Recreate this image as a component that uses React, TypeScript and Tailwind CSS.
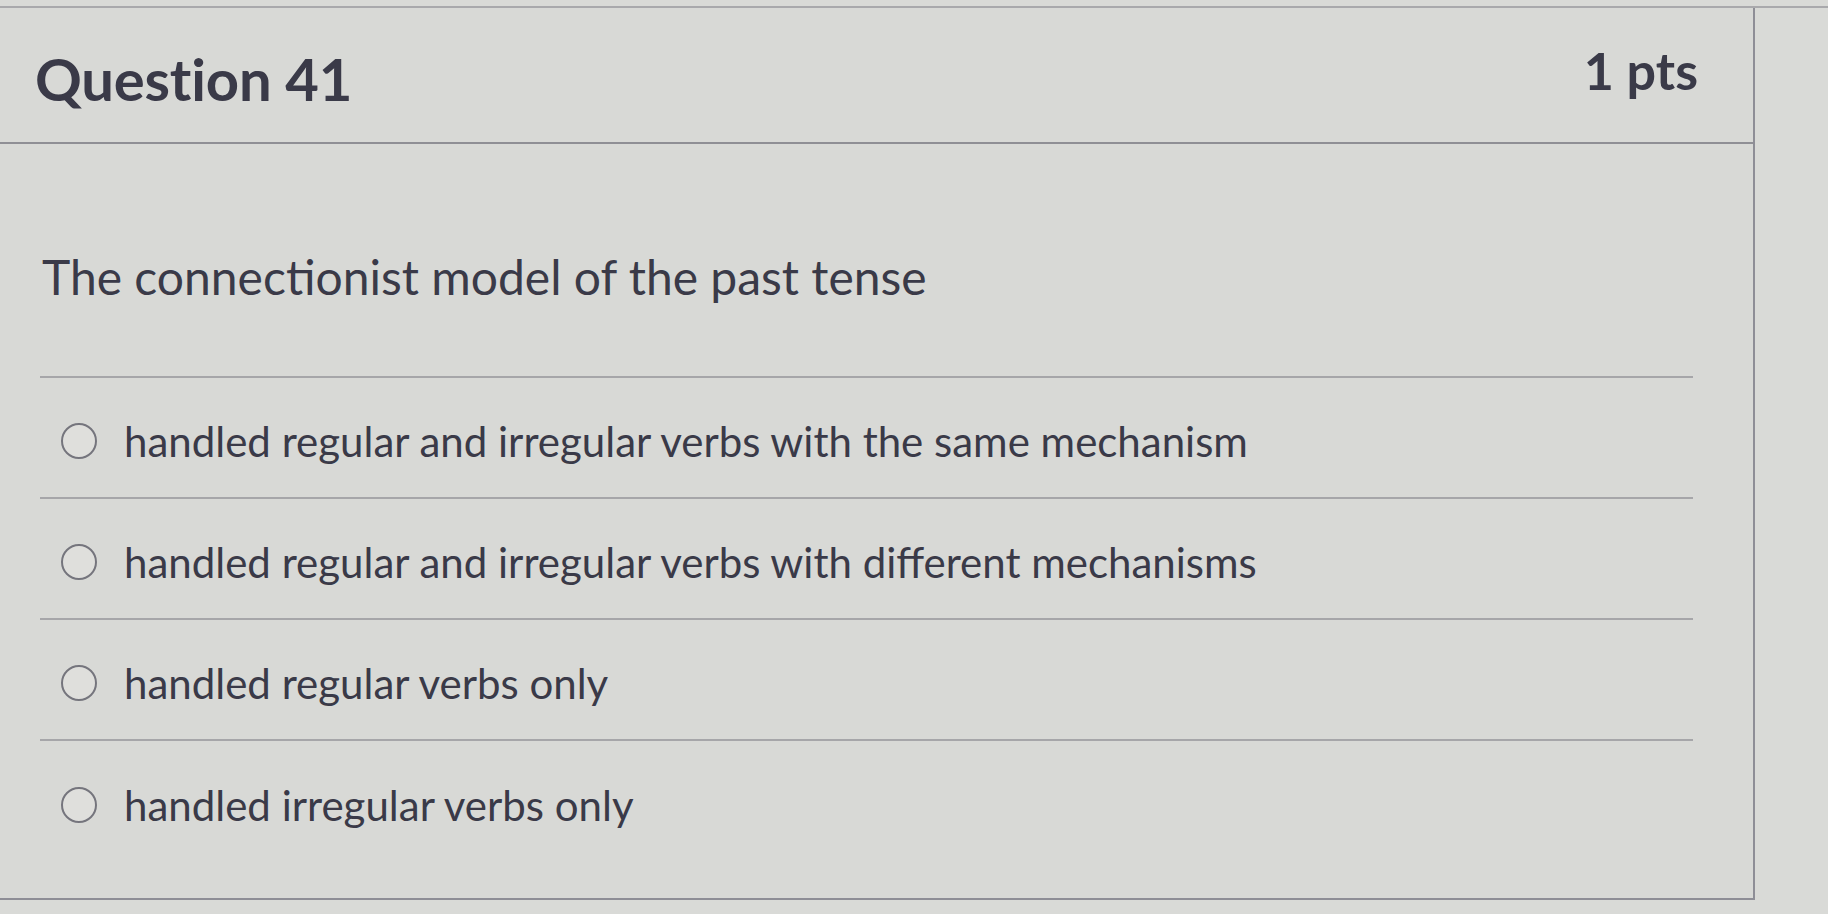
import React from 'react'

const options = [
  'handled regular and irregular verbs with the same mechanism',
  'handled regular and irregular verbs with different mechanisms',
  'handled regular verbs only',
  'handled irregular verbs only',
]

function Radio() {
  return <span className="block h-[36px] w-[36px] shrink-0 rounded-full border-2 border-[#75757d] bg-[#dfdfdc]" />
}

export default function App() {
  return (
    <div
      className="h-[914px] w-full overflow-hidden bg-[#d9dad7] pt-[6px] text-[#3a3a48]"
      style={{ fontFamily: 'Lato, "Noto Sans", sans-serif' }}
    >
      <div className="border-t-2 border-[#a9a9ac]">
        <div className="h-[892px] w-[1755px] border-r-2 border-b-2 border-[#8e8e96] bg-[#d8d9d6]">
          <div className="flex h-[136px] items-center justify-between border-b-2 border-[#8f8f95] pl-[35px] pr-[55px]">
            <h2 className="pt-[8px] text-[58px] font-bold leading-none tracking-[-0.2px]">Question 41</h2>
            <span className="pb-[10px] text-[52px] font-bold leading-none">1 pts</span>
          </div>
          <div className="pl-[40px] pr-[60px]">
            <p className="pt-[104px] pb-[70px] pl-[2px] text-[48px] leading-[1.2] border-b-2 border-[#a6a6a9]">
              The connectionist model of the past tense
            </p>
            {options.map((o, i) => (
              <label
                key={o}
                className={
                  'flex h-[121px] items-center gap-[27px] pl-[21px] pt-[8px] ' +
                  (i < options.length - 1 ? 'border-b-2 border-[#a6a6a9]' : '')
                }
              >
                <Radio />
                <span className="text-[42px] leading-none">{o}</span>
              </label>
            ))}
          </div>
        </div>
      </div>
    </div>
  )
}
